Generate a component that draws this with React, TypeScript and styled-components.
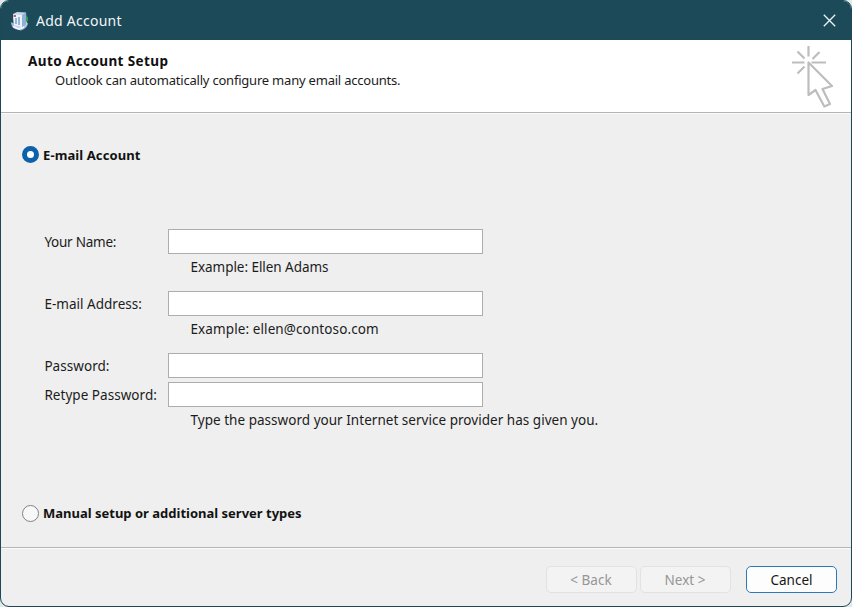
import React from "react";
import styled, { createGlobalStyle } from "styled-components";

const GlobalStyle = createGlobalStyle`
  * { box-sizing: border-box; }
  html, body { margin: 0; background: #dfe9ea; overflow: hidden; }
  body { font-family: "Noto Sans", "Open Sans", sans-serif; color: #1c1c1c; }
`;

const Dialog = styled.main`
  width: 852px;
  height: 607px;
  display: flex;
  flex-direction: column;
  background: #efefef;
  border: 1px solid #1c4857;
  border-radius: 9px;
  overflow: hidden;
`;

const TitleBar = styled.header`
  height: 39px;
  flex: none;
  display: flex;
  align-items: center;
  padding: 0 15px 0 8px;
  background: #1c4a59;
  color: #f1f6f7;
`;

const WindowTitle = styled.h1`
  margin: 0 auto 0 7px;
  font-size: 14px;
  font-weight: 400;
  letter-spacing: 0.25px;
  line-height: 20px;
`;

const CloseButton = styled.button`
  display: flex;
  padding: 0;
  border: 0;
  background: none;
`;

const Banner = styled.section`
  height: 73px;
  flex: none;
  display: flex;
  justify-content: space-between;
  padding: 4px 16px 0 27px;
  background: #fff;
  border-bottom: 1px solid #b4b4b4;
  box-shadow: 0 1px 0 #fafafa;
`;

const BannerText = styled.div`
  padding-top: 8px;
`;

const BannerTitle = styled.h2`
  margin: 0;
  font-size: 13.5px;
  line-height: 19px;
  font-weight: 700;
  letter-spacing: 0.4px;
  color: #101010;
`;

const BannerNote = styled.p`
  margin: 0 0 0 27px;
  font-size: 13px;
  line-height: 19px;
  letter-spacing: -0.21px;
`;

const Content = styled.section`
  flex: 1;
  display: flex;
  flex-direction: column;
  padding: 31px 21px 24px;
  border-bottom: 1px solid #b5b5b5;
  box-shadow: 0 1px 0 #fafafa;
`;

const Choice = styled.label`
  height: 20px;
  display: flex;
  align-items: center;
  gap: 4px;
  font-size: 13px;
  font-weight: 700;
  color: #121212;
`;

const ChoiceText = styled.span<{ $spacing: string; $drop?: number }>`
  padding-top: ${(p) => p.$drop ?? 0}px;
  letter-spacing: ${(p) => p.$spacing};
`;

const Radio = styled.input`
  appearance: none;
  width: 17px;
  height: 17px;
  margin: 0;
  border: 1.5px solid #808080;
  border-radius: 50%;
  background: #f8f8f8;
  &:checked {
    border: 5.5px solid #0c61ad;
    background: #fff;
  }
`;

const Fields = styled.div`
  margin: 65px 0 auto 22px;
  width: 600px;
`;

const Field = styled.div<{ $gap: number }>`
  display: grid;
  grid-template-columns: 124px 315px;
  align-items: center;
  margin-bottom: ${(p) => p.$gap}px;
`;

const Label = styled.label<{ $spacing: string }>`
  padding: 2px 0 0 0.4px;
  font-size: 13.5px;
  line-height: 19px;
  white-space: nowrap;
  letter-spacing: ${(p) => p.$spacing};
`;

const TextInput = styled.input`
  width: 315px;
  height: 25px;
  padding: 0 5px;
  border: 1px solid #adadad;
  border-radius: 0;
  background: #fff;
  outline: 0;
  font: inherit;
`;

const Hint = styled.p<{ $spacing: string }>`
  grid-column: 1 / -1;
  margin: 4px 0 -1px 146.5px;
  font-size: 13.5px;
  line-height: 19px;
  white-space: nowrap;
  letter-spacing: ${(p) => p.$spacing};
`;

const Footer = styled.footer`
  height: 58px;
  flex: none;
  display: flex;
  justify-content: flex-end;
  padding: 18px 14px 0;
`;

const Button = styled.button<{ $gap?: number }>`
  width: 91px;
  height: 27px;
  margin-left: ${(p) => p.$gap ?? 0}px;
  padding: 0;
  border: 1.5px solid #2b7ab8;
  border-radius: 5px;
  background: #fdfdfd;
  color: #151515;
  font-family: inherit;
  font-size: 13.5px;
  &:disabled {
    padding-right: 1px;
    border: 1px solid #e2e2e2;
    background: #f3f3f3;
    color: #969696;
  }
`;

const AppIcon = () => (
  <svg width="20" height="20" viewBox="0 0 20 20">
    <path d="M2 11q0 5 4 7l6 1.500q6-2 7-7l-3-3-4 4-7-1z" fill="#a9b7d8" />
    <path d="M4 3 8 1l9 .5 1 12-5 4-8-1.500z" fill="#c6d6ea" />
    <path d="M4 3.500l9 .5v12l-8-2z" fill="#eaf2fa" />
    <path d="M13 4l4-2.500v12l-4 3z" fill="#8fb0d3" />
    <path d="M7 7v6M10 6v8" fill="none" stroke="#7f9fc9" strokeWidth="1.500" />
    <path d="M4.500 4h2.500v2H4.500z" fill="#b7607f" />
    <path d="M17 5l2 1v4l-2 1z" fill="#2f9a5c" />
    <path d="M4 15.500l6 2.500 5-2" fill="none" stroke="#f2f7fd" strokeWidth="1.800" />
  </svg>
);

const CloseIcon = () => (
  <svg width="13" height="13" viewBox="0 0 13 13" fill="none" stroke="#eef5f6" strokeWidth="1.300">
    <path d="M.8.800 12.200 12.200M12.200.800.800 12.200" />
  </svg>
);

const PointerIcon = () => (
  <svg width="44" height="64" viewBox="0 0 44 64" fill="none" stroke="#bdbdbd" strokeWidth="2.200">
    <path d="M17.500 2v10.500M1 18.500h12.500M20.500 18.500H35M6.500 7.500l7 7M28.500 8l-7 7M6.500 29.500l7-7" />
    <path d="M17.500 18.500v32.500l7-5 8.800 16.500 5.700-2.500-7.500-15 9.500-3z" strokeLinejoin="round" />
  </svg>
);

export default function App() {
  return (
    <>
      <GlobalStyle />
      <Dialog>
        <TitleBar>
          <AppIcon />
          <WindowTitle>Add Account</WindowTitle>
          <CloseButton aria-label="Close"><CloseIcon /></CloseButton>
        </TitleBar>
        <Banner>
          <BannerText>
            <BannerTitle>Auto Account Setup</BannerTitle>
            <BannerNote>Outlook can automatically configure many email accounts.</BannerNote>
          </BannerText>
          <PointerIcon />
        </Banner>
        <Content>
          <Choice>
            <Radio type="radio" name="setup" defaultChecked />
            <ChoiceText $spacing="0.1px" $drop={2}>E-mail Account</ChoiceText>
          </Choice>
          <Fields>
            <Field $gap={15}>
              <Label htmlFor="name" $spacing="-0.25px">Your Name:</Label>
              <TextInput id="name" />
              <Hint $spacing="-0.05px">Example: Ellen Adams</Hint>
            </Field>
            <Field $gap={15}>
              <Label htmlFor="email" $spacing="0.02px">E-mail Address:</Label>
              <TextInput id="email" />
              <Hint $spacing="0.1px">Example: ellen@contoso.com</Hint>
            </Field>
            <Field $gap={4}>
              <Label htmlFor="password" $spacing="0.05px">Password:</Label>
              <TextInput id="password" type="password" />
            </Field>
            <Field $gap={0}>
              <Label htmlFor="retype" $spacing="0.04px">Retype Password:</Label>
              <TextInput id="retype" type="password" />
              <Hint $spacing="0.03px">Type the password your Internet service provider has given you.</Hint>
            </Field>
          </Fields>
          <Choice>
            <Radio type="radio" name="setup" />
            <ChoiceText $spacing="0px">Manual setup or additional server types</ChoiceText>
          </Choice>
        </Content>
        <Footer>
          <Button disabled>&lt; Back</Button>
          <Button disabled $gap={3}>Next &gt;</Button>
          <Button $gap={15}>Cancel</Button>
        </Footer>
      </Dialog>
    </>
  );
}
